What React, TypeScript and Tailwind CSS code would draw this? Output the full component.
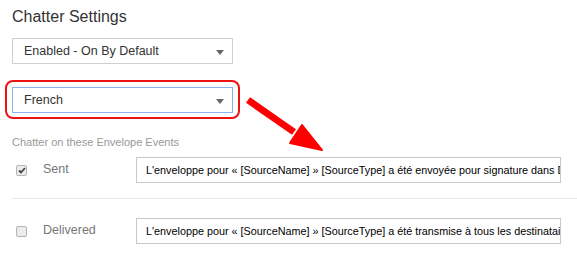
const Caret = () => (
  <svg width="8" height="5" viewBox="0 0 8 5" className="absolute right-[8px] top-[11px]">
    <path d="M0 0 H8 L4 5 Z" fill="#666" />
  </svg>
);

const Select = ({ value, focused }: { value: string; focused?: boolean }) => (
  <div
    className={
      "relative h-[26px] w-[221px] bg-white flex items-center pl-[11px] text-[12.5px] text-[#333] " +
      (focused ? "border border-[#8cb2ea]" : "border border-[#cfcfcf]")
    }
  >
    {value}
    <Caret />
  </div>
);

const Check = ({ checked }: { checked?: boolean }) => (
  <span className="w-[11px] h-[11px] rounded-[2px] border border-[#b5b5b5] bg-[#ececec] flex items-center justify-center">
    {checked && (
      <svg width="8" height="7" viewBox="0 0 8 7">
        <path d="M1 3.5 L3 5.5 L7 1" stroke="#444" strokeWidth="1.8" fill="none" />
      </svg>
    )}
  </span>
);

const EventRow = ({ label, text, checked, first }: { label: string; text: string; checked?: boolean; first?: boolean }) => (
  <div className={"flex items-center border-b border-[#e8e8e8] pb-[15px] pr-[16px] " + (first ? "pt-[8px]" : "pt-[19px]")}>
    <div className="w-[124px] flex items-center pl-[4px]">
      <Check checked={checked} />
      <span className="ml-[16px] text-[12.5px] text-[#777] -mt-[2px]">{label}</span>
    </div>
    <div className="h-[26px] flex-1 border border-[#c8c8c8] bg-white flex items-center pl-[9px] overflow-hidden whitespace-nowrap text-[10.8px] text-black">
      {text}
    </div>
  </div>
);

export default function App() {
  return (
    <div className="relative w-[577px] h-[259px] bg-white overflow-hidden pl-3 pt-[7px] font-['Liberation_Sans',Arial,sans-serif]">
      <h1 className="text-[16px] leading-[20px] text-[#333]">Chatter Settings</h1>
      <div className="mt-[11px]">
        <Select value="Enabled - On By Default" />
      </div>
      <div className="relative mt-[23px]">
        <Select value="French" focused />
        <div className="absolute left-[-7px] top-[-7px] w-[235px] h-[39px] border-2 border-[#ee1111] rounded-[8px]" />
      </div>
      <div className="mt-[22px] text-[11px] leading-[14px] text-[#999]">Chatter on these Envelope Events</div>
      <EventRow
        first
        checked
        label="Sent"
        text="L'enveloppe pour « [SourceName] » [SourceType] a été envoyée pour signature dans DocuSign."
      />
      <EventRow
        label="Delivered"
        text="L'enveloppe pour « [SourceName] » [SourceType] a été transmise à tous les destinataires."
      />
      <svg className="absolute left-[244px] top-[94px]" width="84" height="62" viewBox="0 0 84 62">
        <path d="M4 6 L50 38" stroke="#ff0000" strokeWidth="7" fill="none" />
        <path d="M58 31 L78 56 L46 49 Z" fill="#ff0000" stroke="#ff0000" strokeWidth="2" strokeLinejoin="round" />
      </svg>
    </div>
  );
}
